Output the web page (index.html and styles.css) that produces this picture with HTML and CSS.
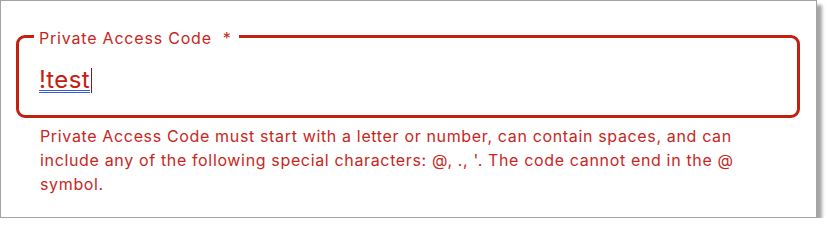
FILE: index.html
```html
<!DOCTYPE html>
<html lang="en">
<head>
    <meta charset="UTF-8">
    <title>Private Access Code</title>
    <link rel="stylesheet" href="styles.css">
</head>
<body>
    <div class="frame">
        <fieldset class="code-field">
            <legend class="code-label">Private Access Code<span class="required">*</span></legend>
            <div class="code-value"><span class="typed">!test</span><span class="caret"></span></div>
        </fieldset>
        <p class="error-text">
            Private Access Code must start with a letter or number, can contain spaces, and can
            include any of the following special characters: @, ., '. The code cannot end in the @
            symbol.
        </p>
    </div>
</body>
</html>
```

FILE: styles.css
```css
:root {
    --error-color: #c4200f;
    --error-text: #c8261c;
    --frame-border: #a3a3a3;
}

* {
    margin: 0;
    padding: 0;
    box-sizing: border-box;
    font-family: Inter, "Open Sans", sans-serif;
}

body {
    background: white;
}

.frame {
    width: 817px;
    height: 218px;
    border: 1px solid var(--frame-border);
    background: white;
    box-shadow: 5px 5px 3px rgba(0, 0, 0, 0.35);
    padding: 24px 0 0 15px;
}

.code-field {
    width: 784px;
    height: 93px;
    border: 3px solid var(--error-color);
    border-radius: 9px;
    padding: 0 15px;
}

.code-label {
    padding: 3px 7px 0 5px;
    font-size: 16px;
    line-height: 20px;
    letter-spacing: 0.8px;
    color: var(--error-text);
}

.required {
    margin-left: 11px;
}

.code-value {
    display: flex;
    align-items: flex-start;
    padding: 17px 0 0 5px;
    font-size: 24px;
    line-height: 29px;
    letter-spacing: 0.4px;
    color: var(--error-color);
}

.typed {
    text-decoration: underline double #3b5bdb;
    text-underline-offset: 2px;
    text-decoration-thickness: 1px;
}

.caret {
    width: 1px;
    height: 25px;
    margin: 3px 0 0 1px;
    background: #7a1a10;
}

.error-text {
    margin: 6px 0 0 24px;
    width: 750px;
    font-size: 16px;
    line-height: 24px;
    letter-spacing: 0.65px;
    color: var(--error-text);
}
```
